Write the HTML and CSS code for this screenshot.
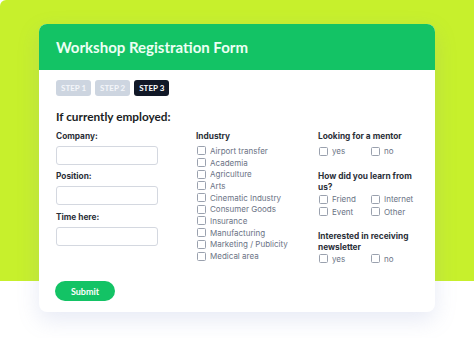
FILE: index.html
```html
<!DOCTYPE html>
<html>
<head>
<meta charset="utf-8">
<link rel="stylesheet" href="styles.css">
</head>
<body>
<div class="stage">
  <div class="card">
    <div class="card-head">Workshop Registration Form</div>
    <div class="card-body">
      <div class="steps">
        <span class="step">STEP 1</span>
        <span class="step">STEP 2</span>
        <span class="step active">STEP 3</span>
      </div>
      <div class="section-title">If currently employed:</div>
      <div class="cols">
        <div class="col-fields">
          <div class="label">Company:</div>
          <div class="input"></div>
          <div class="label l2">Position:</div>
          <div class="input"></div>
          <div class="label l3">Time here:</div>
          <div class="input"></div>
        </div>
        <div class="col-industry">
          <div class="label">Industry</div>
          <ul class="checks">
            <li><span class="box"></span>Airport transfer</li>
            <li><span class="box"></span>Academia</li>
            <li><span class="box"></span>Agriculture</li>
            <li><span class="box"></span>Arts</li>
            <li><span class="box"></span>Cinematic Industry</li>
            <li><span class="box"></span>Consumer Goods</li>
            <li><span class="box"></span>Insurance</li>
            <li><span class="box"></span>Manufacturing</li>
            <li><span class="box"></span>Marketing / Publicity</li>
            <li><span class="box"></span>Medical area</li>
          </ul>
        </div>
        <div class="col-right">
          <div class="label">Looking for a mentor</div>
          <div class="pair first">
            <span class="opt"><span class="box"></span>yes</span>
            <span class="opt"><span class="box"></span>no</span>
          </div>
          <div class="label group">How did you learn from<br>us?</div>
          <div class="pair">
            <span class="opt"><span class="box"></span>Friend</span>
            <span class="opt"><span class="box"></span>Internet</span>
          </div>
          <div class="pair">
            <span class="opt"><span class="box"></span>Event</span>
            <span class="opt"><span class="box"></span>Other</span>
          </div>
          <div class="label group g2">Interested in receiving<br>newsletter</div>
          <div class="pair">
            <span class="opt"><span class="box"></span>yes</span>
            <span class="opt"><span class="box"></span>no</span>
          </div>
        </div>
      </div>
      <button class="submit">Submit</button>
    </div>
  </div>
</div>
</body>
</html>
```
FILE: styles.css
```css
html, body {
  margin: 0;
  padding: 0;
  background: #ffffff;
}
.stage {
  width: 474px;
  height: 338px;
  padding-top: 24px;
  box-sizing: border-box;
  background: linear-gradient(to bottom, #c7f02c 0, #c7f02c 281px, #ffffff 281px);
  border-top-left-radius: 6px;
  overflow: hidden;
}
.card {
  margin-left: 39px;
  width: 396px;
  background: #ffffff;
  border-radius: 8px;
  box-shadow: 0 8px 22px rgba(120, 140, 200, 0.18);
  overflow: hidden;
}
.card-head {
  height: 46px;
  background: #13c365;
  color: #ecfff4;
  font-family: "Lato", sans-serif;
  font-weight: 700;
  font-size: 15px;
  line-height: 46px;
  padding-left: 17px;
}
.card-body {
  padding: 10px 17px 11px 17px;
}
.steps {
  display: flex;
  gap: 4px;
}
.step {
  display: inline-block;
  height: 16px;
  line-height: 16px;
  padding: 0 5px;
  border-radius: 3px;
  background: #cdd5e0;
  color: #f4f6fa;
  font-family: "Lato", sans-serif;
  font-weight: 700;
  font-size: 8px;
}
.step.active {
  background: #111827;
  color: #ffffff;
}
.section-title {
  margin-top: 14px;
  height: 14px;
  line-height: 14px;
  font-family: "Lato", sans-serif;
  font-weight: 700;
  font-size: 11.8px;
  color: #1a1d24;
}
.cols {
  display: grid;
  grid-template-columns: 140px 122px 1fr;
  margin-top: 6px;
}
.col-fields {
  width: 102px;
}
.label {
  font-family: "Inter", sans-serif;
  font-weight: 700;
  font-size: 8.3px;
  line-height: 12px;
  color: #2b2f38;
}
.label.l2 { margin-top: 5px; }
.label.l3 { margin-top: 6px; }
.input {
  margin-top: 4px;
  height: 19px;
  box-sizing: border-box;
  border: 1px solid #d4d8e0;
  border-radius: 3px;
  background: #fff;
}
.checks {
  list-style: none;
  margin: 3px 0 0 0;
  padding: 0;
}
.checks li, .opt {
  display: flex;
  align-items: center;
  height: 11.7px;
  font-family: "Inter", sans-serif;
  font-size: 8px;
  color: #6b7385;
}
.box {
  display: inline-block;
  width: 7px;
  height: 7px;
  border: 1px solid #9aa1ae;
  border-radius: 1.5px;
  margin-left: 1px;
  margin-right: 4px;
  flex: none;
}
.pair {
  display: grid;
  grid-template-columns: 52px 60px;
  height: 12.5px;
  align-items: center;
}
.pair.first { margin-top: 3px; }
.label.group {
  margin-top: 13.5px;
  line-height: 11px;
}
.label.g2 { margin-top: 12.5px; }
.submit {
  display: block;
  margin-top: 16px;
  margin-left: -1px;
  width: 60px;
  height: 20px;
  border: none;
  border-radius: 10px;
  background: #13c365;
  color: #ffffff;
  font-family: "Lato", sans-serif;
  font-weight: 700;
  font-size: 9px;
  padding: 0;
}
```
